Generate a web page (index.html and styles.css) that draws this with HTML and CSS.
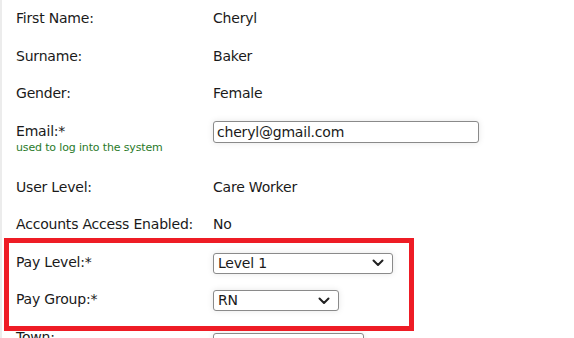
FILE: index.html
```html
<!DOCTYPE html>
<html>
<head>
<meta charset="utf-8">
<link rel="stylesheet" href="styles.css">
</head>
<body>
<div class="form">
  <div class="row"><div class="label">First Name:</div><div class="value">Cheryl</div></div>
  <div class="row"><div class="label">Surname:</div><div class="value">Baker</div></div>
  <div class="row"><div class="label">Gender:</div><div class="value">Female</div></div>
  <div class="row row-email">
    <div class="label">Email:*<div class="hint">used to log into the system</div></div>
    <div class="value"><input class="text-input email" type="text" value="cheryl@gmail.com"></div>
  </div>
  <div class="row"><div class="label">User Level:</div><div class="value">Care Worker</div></div>
  <div class="row"><div class="label">Accounts Access Enabled:</div><div class="value">No</div></div>
  <div class="highlight">
    <div class="row"><div class="label">Pay Level:*</div><div class="value">
      <div class="select sel-level"><span>Level 1</span><svg class="chev" viewBox="0 0 12 8" width="12" height="8"><path d="M1.5 1.5 L6 6 L10.5 1.5" fill="none" stroke="#222" stroke-width="2" stroke-linecap="round" stroke-linejoin="round"/></svg></div>
    </div></div>
    <div class="row"><div class="label">Pay Group:*</div><div class="value">
      <div class="select sel-group"><span>RN</span><svg class="chev" viewBox="0 0 12 8" width="12" height="8"><path d="M1.5 1.5 L6 6 L10.5 1.5" fill="none" stroke="#222" stroke-width="2" stroke-linecap="round" stroke-linejoin="round"/></svg></div>
    </div></div>
  </div>
  <div class="row"><div class="label">Town:</div><div class="value"><input class="text-input town" type="text" value=""></div></div>
</div>
</body>
</html>
```
FILE: styles.css
```css
html, body {
  margin: 0;
  padding: 0;
  background: #fff;
}
body {
  font-family: "DejaVu Sans", Verdana, sans-serif;
  font-size: 14px;
  letter-spacing: -0.2px;
  color: #1a1a1a;
  border-left: 2px solid #ececec;
  height: 338px;
  overflow: hidden;
  box-sizing: border-box;
}
.form {
  padding-left: 14px;
}
.row {
  display: grid;
  grid-template-columns: 197px 1fr;
  align-items: center;
  height: 37.5px;
  line-height: 17px;
}
.row-email {
  height: 56px;
  align-items: start;
  padding-top: 10px;
  box-sizing: border-box;
}
.hint {
  font-size: 11px;
  color: #2a7a2a;
  letter-spacing: -0.15px;
  line-height: 14px;
  margin-top: 1px;
}
.text-input {
  font-family: inherit;
  font-size: 14px;
  letter-spacing: -0.2px;
  color: #1a1a1a;
  border: 1px solid #8a8a8a;
  border-radius: 3px;
  padding: 0 3px;
  height: 22px;
  box-sizing: border-box;
  box-shadow: 0 0 6px rgba(0,0,0,0.10);
  outline: none;
  display: block;
}
.email {
  width: 266px;
  margin-top: -2px;
}
.town {
  width: 151px;
  margin-top: 14px;
}
.highlight {
  position: relative;
}
.highlight::before {
  content: "";
  position: absolute;
  left: -12px;
  top: -6px;
  width: 410px;
  height: 93px;
  border: 5px solid #ee1c25;
  box-sizing: border-box;
  pointer-events: none;
}
.select {
  display: flex;
  align-items: center;
  justify-content: space-between;
  height: 21px;
  box-sizing: border-box;
  border: 1px solid #8a8a8a;
  border-radius: 3px;
  padding: 0 8px 0 4px;
  box-shadow: 0 0 6px rgba(0,0,0,0.10);
  background: #fff;
  margin-top: 2px;
}
.sel-level { width: 180px; }
.sel-group { width: 126px; }
.chev { display: block; }
```
